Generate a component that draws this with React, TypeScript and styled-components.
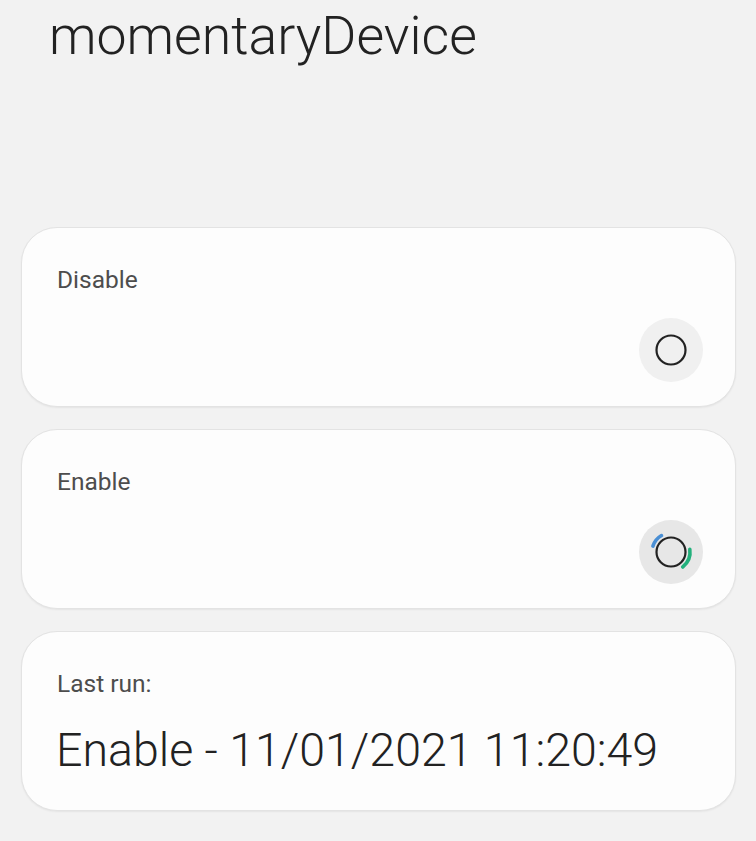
import React from 'react'
import styled, { createGlobalStyle } from 'styled-components'

const GlobalStyle = createGlobalStyle`
  html, body {
    margin: 0;
    padding: 0;
    background: #f2f2f2;
    font-family: Roboto, 'Noto Sans', sans-serif;
  }
`

const Page = styled.div`
  display: flex;
  flex-direction: column;
  padding: 0 20px 0 21px;
  min-height: 841px;
  box-sizing: border-box;
`

const Title = styled.h1`
  margin: 9px 0 0 28px;
  font-size: 53.6px;
  line-height: 1;
  font-weight: 300;
  color: #222;
`

const CardList = styled.div`
  display: flex;
  flex-direction: column;
  gap: 22px;
  margin-top: 164px;
`

const Card = styled.div`
  display: flex;
  flex-direction: column;
  height: 180px;
  box-sizing: border-box;
  padding: 40px 32px 0 35px;
  background: #fdfdfd;
  border: 1px solid #e3e3e3;
  border-radius: 36px;
  box-shadow: 0 1px 2px rgba(0, 0, 0, 0.06);
`

const Label = styled.div`
  font-size: 24.5px;
  line-height: 1;
  color: #4d4d4d;
`

const Value = styled.div`
  margin-top: 31px;
  margin-left: -1px;
  font-size: 46.5px;
  line-height: 1;
  font-weight: 300;
  color: #222;
`

const ButtonRow = styled.div`
  display: flex;
  justify-content: flex-end;
  margin-top: 26px;
`

const RoundButton = styled.button<{ $active?: boolean }>`
  display: flex;
  align-items: center;
  justify-content: center;
  width: 64px;
  height: 64px;
  padding: 0;
  border: none;
  border-radius: 50%;
  background: ${(p) => (p.$active ? '#e7e7e7' : '#f0f0f0')};
  cursor: pointer;
`

const polar = (deg: number, r: number) => {
  const a = (deg * Math.PI) / 180
  return [32 + r * Math.cos(a), 32 + r * Math.sin(a)]
}

const arc = (from: number, to: number, r: number) => {
  const [x1, y1] = polar(from, r)
  const [x2, y2] = polar(to, r)
  return `M ${x1} ${y1} A ${r} ${r} 0 0 1 ${x2} ${y2}`
}

const RunIcon = ({ running }: { running?: boolean }) => (
  <svg width="64" height="64" viewBox="0 0 64 64">
    {running && (
      <>
        <path d={arc(198, 240, 19)} stroke="#4a8fd4" strokeWidth="3.6" fill="none" strokeLinecap="round" />
        <path d={arc(-8, 52, 19)} stroke="#23b07c" strokeWidth="3.6" fill="none" strokeLinecap="round" />
      </>
    )}
    <circle cx="32" cy="32" r="14.5" stroke="#222" strokeWidth="2.2" fill="none" />
  </svg>
)

const ActionCard = ({ label, running }: { label: string; running?: boolean }) => (
  <Card>
    <Label>{label}</Label>
    <ButtonRow>
      <RoundButton $active={running}>
        <RunIcon running={running} />
      </RoundButton>
    </ButtonRow>
  </Card>
)

export default function App() {
  return (
    <>
      <GlobalStyle />
      <Page>
        <Title>momentaryDevice</Title>
        <CardList>
          <ActionCard label="Disable" />
          <ActionCard label="Enable" running />
          <Card>
            <Label>Last run:</Label>
            <Value>Enable - 11/01/2021 11:20:49</Value>
          </Card>
        </CardList>
      </Page>
    </>
  )
}
